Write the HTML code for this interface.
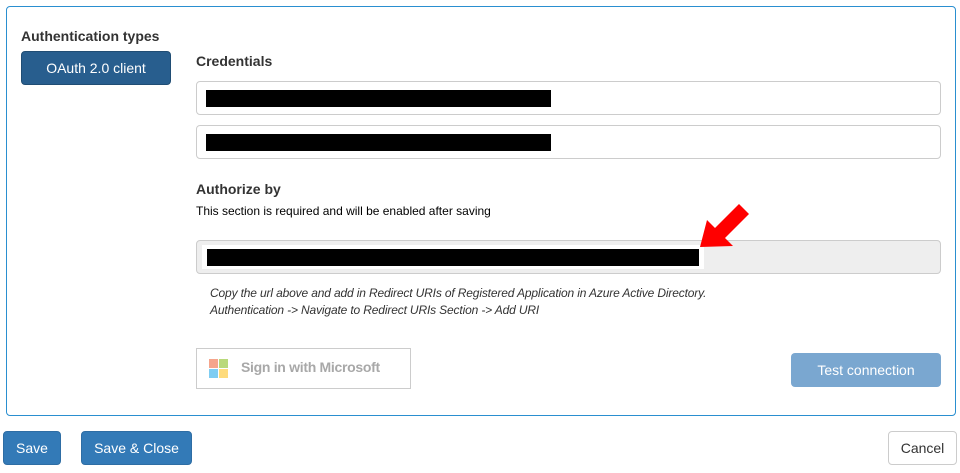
<!DOCTYPE html>
<html><head><style>
body{margin:0;width:960px;height:473px;background:#fff;font-family:"Liberation Sans",sans-serif;color:#333;position:relative;overflow:hidden}
div,span{position:absolute;box-sizing:border-box}
.panel{left:6px;top:6px;width:950px;height:410px;border:1px solid #2a8fd0;border-radius:4px}
.b{font-weight:bold;font-size:14px;color:#333}
.inp{left:196px;width:745px;height:34px;border:1px solid #ccc;border-radius:4px;background:#fff}
.blk{background:#000}
.btn{border-radius:4px;color:#fff;font-size:14px;text-align:center}
</style></head><body>
<div class="panel"></div>
<div class="b" style="left:21px;top:28px">Authentication types</div>
<div class="btn" style="left:21px;top:51px;width:150px;height:34px;background:#285e8e;border:1px solid #204d74;line-height:32px">OAuth 2.0 client</div>
<div class="b" style="left:196px;top:53px">Credentials</div>
<div class="inp" style="top:81px"></div>
<div class="blk" style="left:206px;top:90px;width:345px;height:17px"></div>
<div class="inp" style="top:125px"></div>
<div class="blk" style="left:206px;top:134px;width:345px;height:17px"></div>
<div class="b" style="left:196px;top:181px">Authorize by</div>
<div style="left:196px;top:204px;font-size:12px;color:#000">This section is required and will be enabled after saving</div>
<div class="inp" style="top:240px;background:#eee"></div>
<div style="left:202px;top:245px;width:502px;height:24px;background:#fff"></div>
<div class="blk" style="left:207px;top:249px;width:492px;height:17px"></div>
<svg style="position:absolute;left:695px;top:200px" width="60" height="52"><polygon points="5,47 12,20 20,28 44,4 54,14 30,38 38,46" fill="#f00"/></svg>
<div style="left:210px;top:285px;font-size:12px;font-style:italic;line-height:17px;color:#333;letter-spacing:-0.15px">Copy the url above and add in Redirect URIs of Registered Application in Azure Active Directory.<br>Authentication -&gt; Navigate to Redirect URIs Section -&gt; Add URI</div>
<div style="left:196px;top:348px;width:215px;height:41px;border:1px solid #ccc;background:#fff"></div>
<div style="left:209px;top:359px;width:9px;height:9px;background:#f5a58c"></div>
<div style="left:219px;top:359px;width:9px;height:9px;background:#b9d97a"></div>
<div style="left:209px;top:369px;width:9px;height:9px;background:#7fcdf2"></div>
<div style="left:219px;top:369px;width:9px;height:9px;background:#fedb7c"></div>
<div style="left:241px;top:359px;font-size:14px;color:#a8a8a8;font-weight:bold;letter-spacing:-0.3px">Sign in with Microsoft</div>
<div class="btn" style="left:791px;top:353px;width:150px;height:34px;background:#7aa7d0;line-height:34px">Test connection</div>
<div class="btn" style="left:3px;top:431px;width:58px;height:34px;background:#337ab7;border:1px solid #2e6da4;line-height:32px">Save</div>
<div class="btn" style="left:81px;top:431px;width:111px;height:34px;background:#337ab7;border:1px solid #2e6da4;line-height:32px">Save &amp; Close</div>
<div class="btn" style="left:888px;top:431px;width:69px;height:34px;background:#fff;border:1px solid #ccc;color:#333;line-height:32px">Cancel</div>
</body></html>
